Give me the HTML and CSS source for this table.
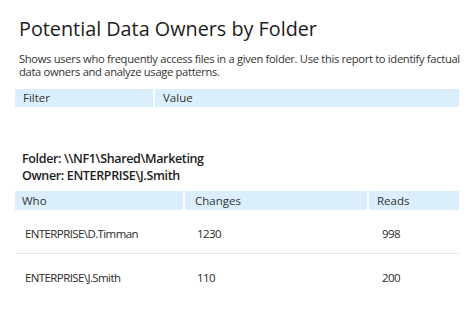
FILE: index.html
```html
<!DOCTYPE html>
<html>
<head>
<meta charset="utf-8">
<link rel="stylesheet" href="styles.css">
</head>
<body>
<div class="report">
  <h1 class="title">Potential Data Owners by Folder</h1>
  <p class="desc">Shows users who frequently access files in a given folder. Use this report to identify factual data owners and analyze usage patterns.</p>
  <div class="filter-head">
    <div class="fcol1">Filter</div>
    <div class="fcol2">Value</div>
  </div>
  <div class="group">
    <div class="group-line">Folder: \\NF1\Shared\Marketing</div>
    <div class="group-line">Owner: ENTERPRISE\J.Smith</div>
  </div>
  <div class="table">
    <div class="thead">
      <div class="c1">Who</div>
      <div class="c2">Changes</div>
      <div class="c3">Reads</div>
    </div>
    <div class="trow">
      <div class="c1">ENTERPRISE\D.Timman</div>
      <div class="c2">1230</div>
      <div class="c3">998</div>
    </div>
    <div class="trow last">
      <div class="c1">ENTERPRISE\J.Smith</div>
      <div class="c2">110</div>
      <div class="c3">200</div>
    </div>
  </div>
</div>
</body>
</html>
```

FILE: styles.css
```css
html, body {
  margin: 0;
  padding: 0;
  background: #fff;
}
body {
  font-family: "Open Sans", "Noto Sans", sans-serif;
  color: #2a2a2a;
}
.report {
  width: 444px;
  padding: 16px 0 0 15px;
}
.title {
  margin: 0 0 0 4px;
  font-size: 19.8px;
  font-weight: 500;
  line-height: 26px;
  color: #1c1c1c;
}
.desc {
  margin: 10px -14px 0 4px;
  font-size: 11.2px;
  line-height: 13px;
  letter-spacing: -0.32px;
  color: #333;
}
.filter-head {
  margin-top: 11px;
  display: grid;
  grid-template-columns: 138px 1fr;
  column-gap: 2px;
  height: 18px;
}
.filter-head div,
.thead div {
  background: #dbeefb;
  font-size: 11.5px;
  line-height: 18px;
  color: #333;
}
.fcol1 { padding-left: 8px; }
.fcol2 { padding-left: 8px; }
.group {
  margin-top: 43px;
  padding-left: 7px;
  font-size: 12.5px;
  font-weight: 600;
  line-height: 17px;
  letter-spacing: -0.35px;
  color: #1c1c1c;
}
.table {
  margin-top: 7px;
}
.thead {
  display: grid;
  grid-template-columns: 168px 182px 1fr;
  column-gap: 2px;
  height: 19px;
}
.thead div {
  line-height: 19px;
  padding-left: 7px;
}
.thead .c2 { padding-left: 10px; }
.thead .c3 { padding-left: 8px; }
.trow {
  display: grid;
  grid-template-columns: 168px 182px 1fr;
  column-gap: 2px;
  height: 43px;
  font-size: 11.5px;
  line-height: 15px;
  letter-spacing: -0.6px;
  color: #2a2a2a;
  border-bottom: 1px solid #e6e6e6;
  margin-left: 1px;
}
.trow div {
  padding-top: 16px;
}
.trow.last { border-bottom: none; }
.trow .c1 { padding-left: 9px; }
.trow .c2 { padding-left: 11px; }
.trow .c3 { padding-left: 12px; }
```
